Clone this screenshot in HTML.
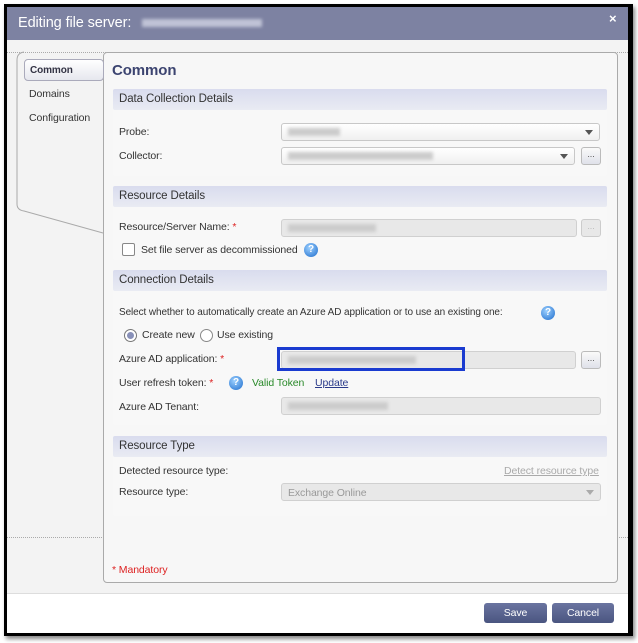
<!DOCTYPE html><html><head><style>
*{margin:0;padding:0;box-sizing:border-box}
body{width:638px;height:643px;background:#fff;position:relative;overflow:hidden;font-family:"Liberation Sans",sans-serif;font-size:10.5px;letter-spacing:-0.1px;color:#333}
.a{position:absolute}
.hdr{position:absolute;left:113px;width:494px;height:21px;background:linear-gradient(#d9dcee,#e9ebf3);font-size:11.5px;color:#333;padding:4px 0 0 6px;border-radius:2px}
.sec{position:absolute;left:113px;width:494px;background:#f8f8f8;border-radius:3px}
.in{position:absolute;height:18px;border:1px solid #c8c8c8;border-radius:3px;background:linear-gradient(#fff,#f0f0f0)}
.dis{background:#e8e8e8;border-color:#d0d0d0}
.bl{position:absolute;height:8px;background:#ccc;filter:blur(1.5px)}
.btn{position:absolute;width:20px;height:18px;border:1px solid #bbb;border-radius:3px;background:linear-gradient(#fafafa,#dfe1ea);font-size:9px;text-align:center;line-height:13px;color:#555}
.arr{position:absolute;right:6px;top:6px;width:0;height:0;border-left:4px solid transparent;border-right:4px solid transparent;border-top:5px solid #555}
.q{position:absolute;width:14px;height:14px;border-radius:50%;background:radial-gradient(circle at 40% 35%,#9cd0ff,#1d6ccc);color:#fff;font-size:10px;font-weight:bold;text-align:center;line-height:14px}
.lbl{position:absolute;left:119px}
.req{color:#d22}
</style></head><body>
<div class="a" style="left:4px;top:4px;width:629px;height:632px;background:#000;box-shadow:2px 3px 4px #888"></div>
<div class="a" style="left:7px;top:7px;width:621px;height:626px;background:#f3f3f3"></div>
<div class="a" style="left:7px;top:7px;width:621px;height:33px;background:#7d82a2"></div>
<div class="a" style="left:18px;top:15px;font-size:14.5px;color:#fff">Editing file server:</div>
<div class="bl" style="left:142px;top:19px;width:120px;background:#c0c3d6"></div>
<div class="a" style="left:609px;top:11px;color:#fff;font-size:13px;font-weight:bold">×</div>
<div class="a" style="left:7px;top:593px;width:621px;height:40px;background:#fff;border-top:1px solid #ddd"></div>
<div class="a" style="left:7px;top:52px;width:621px;border-top:1px dotted #aaa"></div>
<div class="a" style="left:7px;top:537px;width:621px;border-top:1px dotted #aaa"></div>
<svg class="a" style="left:0;top:0" width="638" height="643"><path d="M17 60 Q17 53 24 52 M17 60 L17 204 Q17 210 24 211 L103 233" fill="none" stroke="#aaa"/></svg>
<div class="a" style="left:103px;top:52px;width:515px;height:531px;background:#f7f7f7;border:1px solid #aaa;border-radius:4px"></div>
<div class="a" style="left:24px;top:59px;width:80px;height:22px;border:1px solid #aab;border-radius:4px;background:linear-gradient(#fff,#e6e7ee);font-weight:bold;font-size:10px;color:#334;padding:5px 0 0 5px">Common</div>
<div class="a" style="left:29px;top:88px">Domains</div>
<div class="a" style="left:29px;top:112px">Configuration</div>
<div class="a" style="left:112px;top:62px;font-size:15px;font-weight:bold;color:#3c4470">Common</div>
<div class="sec" style="top:89px;height:87px"></div>
<div class="hdr" style="top:89px">Data Collection Details</div>
<div class="lbl" style="top:126px">Probe:</div>
<div class="in" style="left:281px;top:123px;width:319px"><div class="arr"></div></div>
<div class="bl" style="left:288px;top:128px;width:52px"></div>
<div class="lbl" style="top:150px">Collector:</div>
<div class="in" style="left:281px;top:147px;width:294px"><div class="arr"></div></div>
<div class="bl" style="left:288px;top:152px;width:145px"></div>
<div class="btn" style="left:581px;top:147px">...</div>
<div class="sec" style="top:186px;height:74px"></div>
<div class="hdr" style="top:186px">Resource Details</div>
<div class="lbl" style="top:221px">Resource/Server Name: <span class="req">*</span></div>
<div class="in dis" style="left:281px;top:219px;width:296px"></div>
<div class="bl" style="left:288px;top:224px;width:88px"></div>
<div class="btn" style="left:581px;top:219px;border-color:#ccc;background:#e8e8e8;color:#bbb">...</div>
<div class="a" style="left:122px;top:243px;width:13px;height:13px;border:1px solid #888;border-radius:2px;background:#fff"></div>
<div class="a" style="left:141px;top:244px">Set file server as decommissioned</div>
<div class="q" style="left:304px;top:243px">?</div>
<div class="sec" style="top:270px;height:155px"></div>
<div class="hdr" style="top:270px">Connection Details</div>
<div class="lbl" style="top:307px;font-size:10px">Select whether to automatically create an Azure AD application or to use an existing one:</div>
<div class="q" style="left:541px;top:306px">?</div>
<div class="a" style="left:124px;top:329px;width:13px;height:13px;border:1px solid #777;border-radius:50%;background:#fff"><div class="a" style="left:2px;top:2px;width:7px;height:7px;border-radius:50%;background:#8890b8"></div></div>
<div class="a" style="left:142px;top:329px">Create new</div>
<div class="a" style="left:200px;top:329px;width:13px;height:13px;border:1px solid #888;border-radius:50%;background:#fff"></div>
<div class="a" style="left:217px;top:329px">Use existing</div>
<div class="lbl" style="top:353px">Azure AD application: <span class="req">*</span></div>
<div class="in dis" style="left:281px;top:351px;width:295px"></div>
<div class="bl" style="left:288px;top:356px;width:128px"></div>
<div class="a" style="left:277px;top:347px;width:188px;height:24px;border:3px solid #1a3bd0"></div>
<div class="btn" style="left:581px;top:351px">...</div>
<div class="lbl" style="top:377px">User refresh token: <span class="req">*</span></div>
<div class="q" style="left:229px;top:376px">?</div>
<div class="a" style="left:252px;top:377px;color:#2a8a2a">Valid Token</div>
<div class="a" style="left:315px;top:377px;color:#2a3a8a;text-decoration:underline">Update</div>
<div class="lbl" style="top:401px">Azure AD Tenant:</div>
<div class="in dis" style="left:281px;top:397px;width:320px"></div>
<div class="bl" style="left:288px;top:402px;width:100px"></div>
<div class="sec" style="top:436px;height:80px"></div>
<div class="hdr" style="top:436px">Resource Type</div>
<div class="lbl" style="top:465px">Detected resource type:</div>
<div class="a" style="left:504px;top:465px;color:#aaa;text-decoration:underline">Detect resource type</div>
<div class="lbl" style="top:486px">Resource type:</div>
<div class="in dis" style="left:281px;top:483px;width:320px;color:#999;padding:3px 0 0 6px">Exchange Online<div class="arr" style="border-top-color:#aaa"></div></div>
<div class="a" style="left:112px;top:564px;color:#d22">* Mandatory</div>
<div class="a" style="left:484px;top:603px;width:63px;height:20px;border-radius:3px;background:linear-gradient(#6a74a0,#4a5580);color:#fff;text-align:center;line-height:20px">Save</div>
<div class="a" style="left:552px;top:603px;width:62px;height:20px;border-radius:3px;background:linear-gradient(#6a74a0,#4a5580);color:#fff;text-align:center;line-height:20px">Cancel</div>
</body></html>
